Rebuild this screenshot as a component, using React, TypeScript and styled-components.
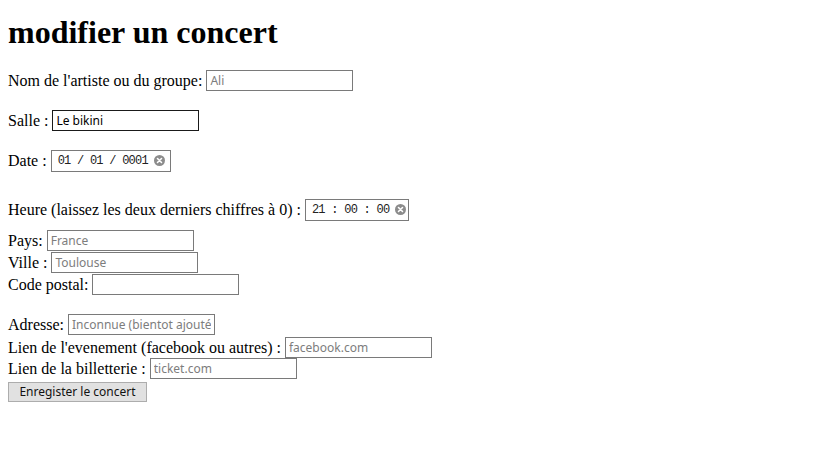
import React from 'react';
import styled, { createGlobalStyle } from 'styled-components';

const GlobalStyle = createGlobalStyle`
  html, body {
    margin: 0;
    background: #ffffff;
  }
  body {
    font-family: "Liberation Serif", "Times New Roman", serif;
    font-size: 16px;
    color: #000000;
  }
`;

const Page = styled.div`
  padding: 12px 8px 8px;
  display: flex;
  flex-direction: column;
`;

const Title = styled.h1`
  margin: 0;
  padding-top: 2px;
  height: 35px;
  line-height: 37px;
  font-size: 32px;
  font-weight: 700;
`;

const Line = styled.div<{ $top: number }>`
  display: flex;
  align-items: center;
  gap: 4px;
  height: 21px;
  margin-top: ${(p) => p.$top}px;
  white-space: nowrap;
`;

const Label = styled.span`
  line-height: 21px;
`;

const TextInput = styled.input<{ $width?: number; $dark?: boolean }>`
  box-sizing: border-box;
  flex-shrink: 0;
  width: ${(p) => p.$width ?? 147}px;
  height: 21px;
  margin: 0;
  padding: 0 3px;
  border: 1px solid ${(p) => (p.$dark ? '#1a1a1a' : '#7a7a7a')};
  font-family: "Noto Sans", "Open Sans", sans-serif;
  font-size: 12px;
  color: #000000;
  background: #ffffff;
  outline: none;

  &::placeholder {
    color: #7d7d7d;
  }
`;

const TimeBox = styled.div<{ $width: number }>`
  box-sizing: border-box;
  flex-shrink: 0;
  width: ${(p) => p.$width}px;
  height: 22px;
  display: flex;
  align-items: center;
  gap: 6px;
  padding: 0 0 0 6px;
  border: 1px solid #7a7a7a;
  background: #ffffff;

  svg {
    flex-shrink: 0;
  }
`;

const TimeText = styled.span`
  font-family: "Liberation Mono", "Courier New", monospace;
  font-size: 12px;
  color: #222222;
  letter-spacing: -0.75px;
`;

const SubmitButton = styled.button`
  box-sizing: border-box;
  width: 139px;
  height: 20px;
  margin: 0;
  padding: 0;
  border: 1px solid #adadad;
  background: #e1e1e1;
  font-family: "Noto Sans", "Open Sans", sans-serif;
  font-size: 12px;
  color: #111111;
`;

const ClearIcon: React.FC = () => (
  <svg width="11" height="11" viewBox="0 0 12 12">
    <circle cx="6" cy="6" r="6" fill="#8c8c8c" />
    <path d="M3.8 3.8 L8.2 8.2 M8.2 3.8 L3.8 8.2" stroke="#ffffff" strokeWidth="1.7" strokeLinecap="round" />
  </svg>
);

const App: React.FC = () => {
  return (
    <Page>
      <GlobalStyle />
      <Title>modifier un concert</Title>

      <Line $top={21}>
        <Label>Nom de l'artiste ou du groupe:</Label>
        <TextInput placeholder="Ali" />
      </Line>

      <Line $top={19}>
        <Label>Salle :</Label>
        <TextInput $dark defaultValue="Le bikini" />
      </Line>

      <Line $top={19}>
        <Label>Date :</Label>
        <TimeBox $width={120}>
          <TimeText>01 / 01 / 0001</TimeText>
          <ClearIcon />
        </TimeBox>
      </Line>

      <Line $top={28}>
        <Label>Heure (laissez les deux derniers chiffres à 0) :</Label>
        <TimeBox $width={104}>
          <TimeText>21 : 00 : 00</TimeText>
          <ClearIcon />
        </TimeBox>
      </Line>

      <Line $top={10}>
        <Label>Pays:</Label>
        <TextInput placeholder="France" />
      </Line>
      <Line $top={1}>
        <Label>Ville :</Label>
        <TextInput placeholder="Toulouse" />
      </Line>
      <Line $top={1}>
        <Label>Code postal:</Label>
        <TextInput />
      </Line>

      <Line $top={19}>
        <Label>Adresse:</Label>
        <TextInput placeholder="Inconnue (bientot ajouté)" />
      </Line>
      <Line $top={2}>
        <Label>Lien de l'evenement (facebook ou autres) :</Label>
        <TextInput placeholder="facebook.com" />
      </Line>
      <Line $top={0}>
        <Label>Lien de la billetterie :</Label>
        <TextInput placeholder="ticket.com" />
      </Line>
      <Line $top={2}>
        <SubmitButton type="button">Enregister le concert</SubmitButton>
      </Line>
    </Page>
  );
};

export default App;
